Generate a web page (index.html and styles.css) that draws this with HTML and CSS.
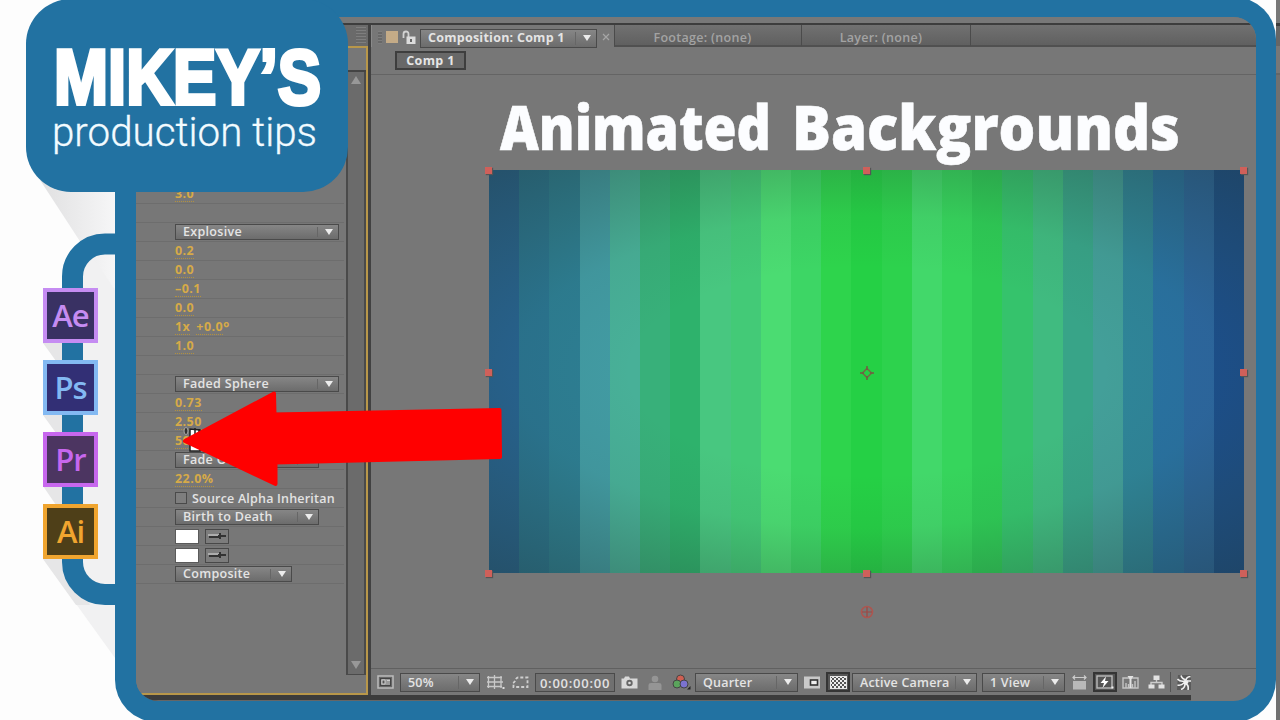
FILE: index.html
```html
<!DOCTYPE html>
<html lang="en">
<head>
    <meta charset="UTF-8">
    <meta name="viewport" content="width=device-width, initial-scale=1.0">
    <title>Mikey's Production Tips - Animated Backgrounds</title>
    <link rel="stylesheet" href="styles.css">
</head>
<body>
<div class="stage">

    <!-- Left rail with the Adobe app badges -->
    <div class="rail">
        <svg class="rail-bg" width="115" height="720" viewBox="0 0 115 720">
            <defs>
                <linearGradient id="fold" x1="0" x2="1" y1="0" y2="0">
                    <stop offset="0" stop-color="#e0e0e1"/>
                    <stop offset="1" stop-color="#f6f6f7"/>
                </linearGradient>
            </defs>
            <path d="M40 180 L115 295 V180 Z" fill="url(#fold)"/>
            <path d="M78 236 L115 290 V658 L66 590 L43 558 H62 V505 L43 486 H62 V433 L43 415 H62 V362 L43 343 H62 V280 Q64 250 83 243 Z" fill="#f1f1f2"/>
            <path d="M43 343 L56 361 H62 V343 Z M43 415 L56 433 H62 V415 Z M43 486 L56 505 H62 V486 Z M43 559 L76 605 H90 L62 559 Z" fill="#e6e6e7"/>
            <path d="M116 244 H105 A32.5 32.5 0 0 0 72.5 276.500 V562 A32.500 32.500 0 0 0 105 594.500 H116" fill="none" stroke="#2272a2" stroke-width="21"/>
        </svg>
        <div class="badges">
            <div class="badge ae">Ae</div>
            <div class="badge ps">Ps</div>
            <div class="badge pr">Pr</div>
            <div class="badge ai">Ai</div>
        </div>
    </div>

    <!-- Blue frame round the editor -->
    <div class="frame">
        <div class="screen">
            <div class="menubar"></div>
            <div class="panels">

                <!-- Effect controls -->
                <div class="effects">
                    <div class="effects-tabs"><span class="grip"></span></div>
                    <div class="effects-box">
                        <div class="props">
                            <div class="row"><span class="val">3.0</span></div>
                            <div class="row"></div>
                            <div class="row"><span class="select w163">Explosive</span></div>
                            <div class="row"><span class="val">0.2</span></div>
                            <div class="row"><span class="val">0.0</span></div>
                            <div class="row"><span class="val">–0.1</span></div>
                            <div class="row"><span class="val">0.0</span></div>
                            <div class="row"><span class="val">1x</span><span class="val second">+0.0</span><span class="deg">°</span></div>
                            <div class="row"><span class="val">1.0</span></div>
                            <div class="row"></div>
                            <div class="row"><span class="select w163">Faded Sphere</span></div>
                            <div class="row"><span class="val">0.73</span></div>
                            <div class="row"><span class="val">2.50</span></div>
                            <div class="row"><span class="val">50.0</span></div>
                            <div class="row"><span class="select w143">Fade Out</span></div>
                            <div class="row"><span class="val">22.0%</span></div>
                            <div class="row"><span class="check"></span><span class="label">Source Alpha Inheritan</span></div>
                            <div class="row"><span class="select w143">Birth to Death</span></div>
                            <div class="row"><span class="swatch"></span><span class="dropper"><svg width="20" height="10" viewBox="0 0 20 10"><path d="M1 4 H14" stroke="#ddd" stroke-width="1"/><path d="M2 6 H12 M11 5 H19" stroke="#333" stroke-width="2"/><path d="M13 2 V8" stroke="#333" stroke-width="2"/></svg></span></div>
                            <div class="row"><span class="swatch"></span><span class="dropper"><svg width="20" height="10" viewBox="0 0 20 10"><path d="M1 4 H14" stroke="#ddd" stroke-width="1"/><path d="M2 6 H12 M11 5 H19" stroke="#333" stroke-width="2"/><path d="M13 2 V8" stroke="#333" stroke-width="2"/></svg></span></div>
                            <div class="row"><span class="select w116">Composite</span></div>
                        </div>
                        <div class="scrollbar"><i class="up"></i><i class="down"></i></div>
                    </div>
                </div>

                <!-- Composition viewer -->
                <div class="comp">
                    <div class="tabs">
                        <div class="tab-active">
                            <span class="grip small"></span>
                            <span class="tan"></span>
                            <svg class="lock" width="14" height="15" viewBox="0 0 14 15"><path d="M1.500 8 V4 A2.500 2.500 0 0 1 6.500 4 V7" fill="none" stroke="#d2d2d2" stroke-width="1.800"/><rect x="4.500" y="6.500" width="9" height="7.500" fill="#dcdcdc"/><rect x="8" y="9" width="2" height="3" fill="#666"/></svg>
                            <span class="select comp-select">Composition: Comp 1</span>
                            <svg class="close" width="8" height="8" viewBox="0 0 8 8"><path d="M1 1 L7 7 M7 1 L1 7" stroke="#a5a5a5" stroke-width="1.200"/></svg>
                        </div>
                        <div class="tab footage">Footage: (none)</div>
                        <div class="tab layer">Layer: (none)</div>
                        <div class="tab rest"></div>
                    </div>
                    <div class="crumbs"><span class="chip">Comp 1</span></div>

                    <div class="work">
                        <svg class="title" width="700" height="95" viewBox="0 0 700 95">
                            <text x="1" y="75" textLength="271" lengthAdjust="spacingAndGlyphs">Animated</text>
                            <text x="293" y="75" textLength="388" lengthAdjust="spacingAndGlyphs">Backgrounds</text>
                        </svg>
                        <div class="canvas">
                            <i class="handle tl"></i><i class="handle tc"></i><i class="handle tr"></i>
                            <i class="handle ml"></i><i class="handle mr"></i>
                            <i class="handle bl"></i><i class="handle bc"></i><i class="handle br"></i>
                            <svg class="anchor" width="16" height="16" viewBox="0 0 16 16"><path d="M8 3.500 L12.500 8 L8 12.500 L3.500 8 Z" fill="none" stroke="#6f7044" stroke-width="1.600"/><path d="M8 1 V5 M8 11 V15 M1 8 H5 M11 8 H15" stroke="#705f40" stroke-width="1.500"/></svg>
                            <svg class="target" width="16" height="16" viewBox="0 0 16 16"><circle cx="8" cy="8" r="5.500" fill="none" stroke="#ad5650" stroke-width="1.600"/><path d="M8 3 V13 M3 8 H13" stroke="#a04742" stroke-width="1.200"/></svg>
                        </div>
                    </div>

                    <div class="toolbar">
                        <svg width="17" height="14" viewBox="0 0 17 14"><rect x="1" y="1" width="15" height="12" fill="#666" stroke="#bdbdbd" stroke-width="1.500"/><rect x="3.500" y="3.500" width="10" height="7" fill="#999" stroke="#444"/><path d="M5 5 H8 V9 H5 Z M10 5.500 H13" fill="#555" stroke="#ccc"/></svg>
                        <span class="select w80">50%</span>
                        <svg width="19" height="16" viewBox="0 0 19 16"><path d="M1 3.500 H16 M1 12.500 H16 M2.500 2 V14 M15 2 V14 M8.500 1 V15 M1 8 H17" fill="none" stroke="#c9c9c9" stroke-width="1.300"/><rect x="16.500" y="13" width="2" height="2" fill="#ddd"/></svg>
                        <svg width="17" height="14" viewBox="0 0 17 14"><path d="M1 8 C4 7 3 3 6 2.500 H15.500 V12 H1.500 V8" fill="none" stroke="#cfcfcf" stroke-width="1.800" stroke-dasharray="3 2"/></svg>
                        <span class="time">0:00:00:00</span>
                        <svg width="17" height="13" viewBox="0 0 17 13"><path d="M0.500 2.500 H3 L4 0.500 H8 L9 2.500 H16.500 V12.500 H0.500 Z" fill="#d9d9d9"/><circle cx="8.500" cy="7" r="3.200" fill="#666"/><circle cx="8.500" cy="7" r="1.300" fill="#ddd"/></svg>
                        <svg width="14" height="15" viewBox="0 0 14 15"><circle cx="7" cy="4" r="3.300" fill="#959595"/><path d="M0.500 15 V10 Q0.500 8 3 8 H11 Q13.500 8 13.500 10 V15 Z" fill="#959595"/></svg>
                        <svg width="19" height="16" viewBox="0 0 19 16"><circle cx="8.500" cy="5" r="4" fill="#cf5f52" stroke="#444"/><circle cx="5" cy="10" r="4" fill="#5aa45c" stroke="#444"/><circle cx="12" cy="10" r="4" fill="#7b72cf" stroke="#444"/><path d="M15 15.500 H18.500 V12 Z" fill="#222"/></svg>
                        <span class="select w102">Quarter</span>
                        <svg width="16" height="13" viewBox="0 0 16 13"><rect x="0" y="0.500" width="16" height="12" fill="#c9c9c9"/><rect x="6.500" y="4" width="7" height="5" fill="#eee" stroke="#333" stroke-width="1.600"/></svg>
                        <span class="pressed"><svg width="17" height="13" viewBox="0 0 17 13"><defs><pattern id="check" width="4" height="4" patternUnits="userSpaceOnUse"><rect width="4" height="4" fill="#eee"/><rect width="2" height="2" fill="#555"/><rect x="2" y="2" width="2" height="2" fill="#555"/></pattern></defs><rect width="16" height="12" x="0.500" y="0.500" fill="url(#check)" stroke="#e5e5e5"/></svg></span>
                        <span class="select w125">Active Camera</span>
                        <span class="select w83">1 View</span>
                        <svg width="15" height="15" viewBox="0 0 15 15"><path d="M1 2.500 H14 M3 0.500 L1 2.500 L3 4.500 M12 0.500 L14 2.500 L12 4.500" fill="none" stroke="#ccc" stroke-width="1.200"/><rect x="1" y="6" width="13" height="8.500" fill="#b9b9b9"/></svg>
                        <span class="pressed"><svg width="18" height="14" viewBox="0 0 18 14"><rect x="1" y="1" width="15" height="12" fill="none" stroke="#bbb" stroke-width="1.400"/><path d="M10 1.500 L4.500 8 H8 L6.500 13 L12.500 6 H9 Z" fill="#fff"/><rect x="15.500" y="11.500" width="2" height="2" fill="#eee"/></svg></span>
                        <svg width="17" height="14" viewBox="0 0 17 14"><path d="M1 3 H16 V13 H1 Z M4 13 V8 M6.500 13 V9 M10.500 13 V9 M13 13 V6" fill="none" stroke="#c4c4c4" stroke-width="1.400"/><path d="M5.500 1 H11.500 L9.500 4 V13 H7.500 V4 Z" fill="#e2e2e2"/></svg>
                        <svg width="17" height="14" viewBox="0 0 17 14"><path d="M8.500 4 V7.500 M3 10 V7.500 H14 V10" fill="none" stroke="#ccc" stroke-width="1.400"/><rect x="5.500" y="0.500" width="6" height="4.500" fill="#e2e2e2"/><rect x="0.500" y="9.500" width="6" height="4" fill="#e2e2e2"/><rect x="10.500" y="9.500" width="6" height="4" fill="#e2e2e2"/></svg>
                        <span class="sep"></span>
                        <svg width="14" height="15" viewBox="0 0 14 15"><path d="M14 0 H1 L0 15 H14 Z" fill="#5a5a5a"/><path d="M9 5 Q5 4 4 0.500 M8 6 Q3 7 0.500 4 M7 8 Q4 11 0.500 10 M8 9 Q8 13 4 14.500 M9 9 Q12 10 11 15 M9 5.500 Q9 2 13.500 1.500 M10 6 H14" fill="none" stroke="#eee" stroke-width="1.600"/><circle cx="8.800" cy="7.300" r="2.400" fill="#eee"/></svg>
                    </div>
                </div>
            </div>
            <div class="bottom-edge"></div>
        </div>
    </div>

    <div class="edge"></div>

    <!-- Logo over the frame corner -->
    <div class="logo">
        <svg width="322" height="192" viewBox="0 0 322 192">
            <text class="logo-name" x="28" y="104.500" textLength="267" lengthAdjust="spacingAndGlyphs">MIKEY’S</text>
            <text class="logo-sub" x="26" y="147" textLength="265" lengthAdjust="spacingAndGlyphs">production tips</text>
        </svg>
    </div>

    <!-- Mouse pointer and red arrow -->
    <svg class="arrow" width="330" height="110" viewBox="180 385 330 110">
        <path d="M190 429 V451 H200 V430 Z" fill="#fff" stroke="#222" stroke-width="1.500"/>
        <path d="M195 428 V436 M199 429 V434" stroke="#222" stroke-width="1.500"/>
        <ellipse cx="186" cy="431" rx="2" ry="3.500" fill="#333" stroke="#aaa"/>
        <path d="M185 441 L274 393.500 L274.500 414.500 L499.500 410 L500 457 L275.500 462.500 L275.500 484 Z" fill="#f00" stroke="#f00" stroke-width="4" stroke-linejoin="round"/>
    </svg>
</div>
</body>
</html>
```
FILE: styles.css
```css
body {
    margin: 0;
    background: #fff;
    font-family: "Open Sans", "Noto Sans", sans-serif;
}
.stage {
    position: relative;
    display: grid;
    grid-template-columns: 115px 1161px 4px;
    width: 1280px;
    height: 720px;
    overflow: hidden;
    background: #fdfdfd;
}

/* left rail */
.rail {
    position: relative;
}
.rail-bg {
    position: absolute;
    left: 0;
    top: 0;
}
.badges {
    position: relative;
    display: flex;
    flex-direction: column;
    gap: 17px;
    padding: 288px 0 0 43px;
}
.badge {
    box-sizing: border-box;
    width: 55px;
    height: 55px;
    border: 4px solid;
    font-size: 31px;
    font-weight: 600;
    line-height: 47px;
    text-align: center;
    letter-spacing: -1px;
}
.ae { color: #c58cf2; background: #393163; }
.ps { color: #83b9f2; background: #322f75; }
.pr { color: #c767ee; background: #4c3561; }
.ai { color: #f0a52f; background: #4e3f18; }

/* frame */
.frame {
    box-sizing: border-box;
    height: 725px;
    margin-top: -3px;
    padding: 20px 20px 21px 21px;
    border-radius: 0 42px 42px 42px;
    background: #2272a2;
}
.screen {
    display: flex;
    flex-direction: column;
    height: 684px;
    overflow: hidden;
    border-radius: 22px;
    background: #777;
}
.menubar {
    height: 6px;
    border-bottom: 2px solid #3d3d3d;
    background: #787878;
}
.panels {
    display: flex;
    height: 670px;
}
.bottom-edge {
    width: 1055px;
    height: 5px;
    border-bottom: 1px solid #666;
    background: #3c3c3c;
}
.edge {
    background: linear-gradient(#777 23px, #3d3d3d 23px 26px, #666 26px 46px, #777 46px 73px, #666 73px 75px, #707070 75px);
}

/* effect controls */
.effects {
    box-sizing: border-box;
    width: 235px;
    border-right: 3px solid #414141;
}
.effects-tabs {
    display: flex;
    justify-content: flex-end;
    height: 21px;
    padding-right: 2px;
    background: #6a6a6a;
}
.grip {
    width: 10px;
    height: 17px;
    margin: 2px 0;
    background: repeating-linear-gradient(#7e7e7e 0 1px, #686868 1px 3px);
}
.effects-box {
    box-sizing: border-box;
    display: flex;
    height: 649px;
    border: 2px solid #b8974a;
    border-left: 0;
    background: linear-gradient(#777 22px, #444 22px 24px, #777 24px);
}
.props {
    flex: 1;
    padding-top: 137px;
}
.row {
    box-sizing: border-box;
    display: flex;
    align-items: center;
    width: 208px;
    height: 19px;
    padding-left: 39px;
    border-bottom: 1px solid #6d6d6d;
}
.val {
    height: 14px;
    margin-top: 1px;
    border-bottom: 1px dotted #b2913f;
    color: #d6aa48;
    font-size: 12.5px;
    font-weight: 700;
    line-height: 13px;
    letter-spacing: .45px;
}
.second {
    margin-left: 6px;
}
.deg {
    color: #d6aa48;
    font-size: 15px;
    font-weight: 700;
    line-height: 13px;
}
.label {
    margin-left: 5px;
    color: #e3e3e3;
    font-size: 12.5px;
    font-weight: 600;
    letter-spacing: .2px;
    white-space: nowrap;
}
.check {
    box-sizing: border-box;
    width: 12px;
    height: 12px;
    border: 1px solid #4a4a4a;
    background: #7e7e7e;
}
.swatch {
    box-sizing: border-box;
    width: 24px;
    height: 15px;
    border: 1px solid #5a5a5a;
    background: #fff;
}
.dropper {
    box-sizing: border-box;
    display: flex;
    align-items: center;
    justify-content: center;
    width: 24px;
    height: 15px;
    margin-left: 6px;
    border: 1px solid #484848;
    background: #7c7c7c;
}
.scrollbar {
    box-sizing: border-box;
    display: flex;
    flex-direction: column;
    justify-content: space-between;
    align-items: center;
    width: 20px;
    height: 603px;
    margin: 24px 0 0;
    padding: 4px 0 5px;
    border: 1px solid #4a4a4a;
    border-width: 0 2px 1px 2px;
    background: #6b6b6b;
}
.up, .down {
    border: 5px solid transparent;
    border-width: 0 5px 8px;
    border-bottom-color: #989898;
}
.down {
    border-width: 8px 5px 0;
    border-top-color: #989898;
}

/* dropdown buttons */
.select {
    position: relative;
    box-sizing: border-box;
    height: 16px;
    padding-left: 7px;
    border: 1px solid #4a4a4a;
    background: linear-gradient(#868686, #6c6c6c);
    color: #e4e4e4;
    font-size: 12.5px;
    font-weight: 600;
    line-height: 14px;
    letter-spacing: .3px;
    white-space: nowrap;
}
.select::before {
    content: "";
    position: absolute;
    right: 20px;
    top: 2px;
    bottom: 2px;
    width: 1px;
    background: #666;
}
.select::after {
    content: "";
    position: absolute;
    right: 5px;
    top: calc(50% - 3px);
    border: 5px solid transparent;
    border-width: 6px 4.5px 0;
    border-top-color: #ececec;
}
.w163 { width: 164px; }
.w143 { width: 144px; }
.w116 { width: 117px; }
.w80 { width: 80px; }
.w102 { width: 103px; }
.w125 { width: 125px; }
.w83 { width: 83px; }

/* composition panel */
.comp {
    display: flex;
    flex-direction: column;
    width: 885px;
}
.tabs {
    display: flex;
    height: 22px;
}
.tab-active {
    box-sizing: border-box;
    display: flex;
    align-items: center;
    width: 243px;
    padding: 2px 0 0 6px;
    border-left: 1px solid #8a8a8a;
}
.small {
    width: 4px;
    height: 13px;
}
.tan {
    width: 12px;
    height: 12px;
    margin: 0 4px 0 4px;
    background: #c4ab87;
}
.comp-select {
    width: 177px;
    height: 19px;
    margin: 2px 5px 0 4px;
    padding-left: 7px;
    line-height: 16px;
    font-weight: 700;
    letter-spacing: .25px;
}
.tab {
    box-sizing: border-box;
    border-left: 1px solid #4b4b4b;
    border-bottom: 2px solid #505050;
    background: linear-gradient(#717171, #606060);
    color: #a3a3a3;
    font-size: 12.5px;
    font-weight: 600;
    line-height: 25px;
    text-align: center;
    letter-spacing: .3px;
}
.footage { width: 187px; padding-right: 11px; }
.layer { width: 169px; padding-right: 10px; }
.rest { flex: 1; }
.crumbs {
    box-sizing: border-box;
    height: 28px;
    padding: 4px 24px;
    border-bottom: 1px solid #646464;
}
.chip {
    box-sizing: border-box;
    display: block;
    width: 71px;
    height: 19px;
    border: 2px solid #3e3e3e;
    background: #686868;
    color: #e6e6e6;
    font-size: 12.5px;
    font-weight: 700;
    line-height: 16px;
    text-align: center;
    letter-spacing: .4px;
}
.work {
    height: 593px;
}
.title {
    display: block;
    margin-left: 128px;
    overflow: visible;
    fill: #fcfdff;
    stroke: #fcfdff;
    stroke-width: .6px;
    font-size: 62px;
    font-weight: 800;
}

/* striped artwork with soft darkening to the corners */
.canvas {
    position: relative;
    width: 755px;
    height: 403px;
    margin-left: 118px;
    background:
        radial-gradient(ellipse 520px 230px at center, transparent 45%, rgba(38, 62, 50, .06) 68%, rgba(38, 62, 50, .2) 86%, rgba(34, 56, 52, .38) 112%),
        linear-gradient(90deg,
            #27628f 4%, #2a7490 4% 8%, #2d7e93 8% 12%, #429ba3 12% 16%, #48b098 16% 20%,
            #38b07a 20% 24%, #2eb26c 24% 28%, #48c780 28% 32%, #43ca77 32% 36%, #4bdc72 36% 40%,
            #3dd665 40% 44%, #2ed44c 44% 48%, #25d045 48% 52%, #2dd24d 52% 56%, #42d86a 56% 60%,
            #36d55c 60% 64%, #2ecb55 64% 68%, #35c36c 68% 72%, #40bb80 72% 76%, #38a488 76% 80%,
            #439f99 80% 84%, #2f8599 84% 88%, #2972a2 88% 92%, #2c67a0 92% 96%, #1c4f8c 96%);
}
.handle {
    position: absolute;
    width: 7px;
    height: 7px;
    margin: -3px 0 0 -4px;
    background: #cf605a;
    box-shadow: 1px 1px 1px #555;
}
.tl { left: 0; top: 0; }
.tc { left: 50%; top: 0; }
.tr { left: 100%; top: 0; }
.ml { left: 0; top: 50%; }
.mr { left: 100%; top: 50%; }
.bl { left: 0; top: 100%; }
.bc { left: 50%; top: 100%; }
.br { left: 100%; top: 100%; }
.anchor {
    position: absolute;
    left: 370px;
    top: 195px;
}
.target {
    position: absolute;
    left: 370px;
    top: 434px;
}

/* viewer toolbar */
.toolbar {
    box-sizing: border-box;
    display: grid;
    grid-template-columns: 23px 86px 26px 23px 86px 27px 24px 23px 109px 22px 26px 130px 90px 21px 29px 26px 22px 7px 14px;
    align-items: center;
    height: 27px;
    padding-left: 6px;
    border-top: 1px solid #606060;
}
.toolbar .select {
    height: 19px;
    line-height: 17px;
    letter-spacing: .2px;
}
.time {
    box-sizing: border-box;
    width: 80px;
    height: 19px;
    border: 1px solid #4a4a4a;
    background: #707070;
    color: #e2e2e2;
    font-size: 13px;
    font-weight: 600;
    line-height: 18px;
    text-align: center;
    letter-spacing: .75px;
}
.pressed {
    box-sizing: border-box;
    display: flex;
    align-items: center;
    justify-content: center;
    width: 24px;
    height: 20px;
    border: 2px solid #353535;
    background: #555;
}
.sep {
    width: 1px;
    height: 20px;
    background: #555;
}

/* logo */
.logo {
    position: absolute;
    left: 26px;
    top: -1px;
    width: 322px;
    height: 193px;
    border-radius: 45px;
    background: #2272a2;
}
.logo svg {
    overflow: visible;
}
.logo-name {
    fill: #fff;
    stroke: #fff;
    stroke-width: 4px;
    font-family: "Liberation Sans", sans-serif;
    font-size: 78px;
    font-weight: 700;
}
.logo-sub {
    fill: #f2fbff;
    stroke: #f2fbff;
    stroke-width: .3px;
    font-family: Roboto, "Liberation Sans", sans-serif;
    font-size: 40px;
    font-weight: 300;
}
.arrow {
    position: absolute;
    left: 180px;
    top: 385px;
}
```
